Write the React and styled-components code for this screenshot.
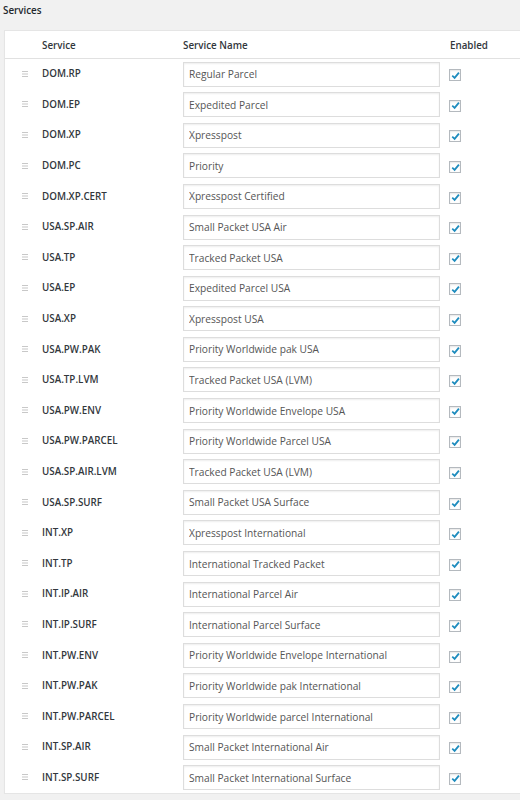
import styled, { createGlobalStyle } from "styled-components";

const GlobalStyle = createGlobalStyle`
  html, body {
    margin: 0;
    padding: 0;
    background: #f1f1f1;
    font-family: "Open Sans", "Liberation Sans", sans-serif;
    color: #23282d;
  }
`;

const services = [
  ["DOM.RP", "Regular Parcel"],
  ["DOM.EP", "Expedited Parcel"],
  ["DOM.XP", "Xpresspost"],
  ["DOM.PC", "Priority"],
  ["DOM.XP.CERT", "Xpresspost Certified"],
  ["USA.SP.AIR", "Small Packet USA Air"],
  ["USA.TP", "Tracked Packet USA"],
  ["USA.EP", "Expedited Parcel USA"],
  ["USA.XP", "Xpresspost USA"],
  ["USA.PW.PAK", "Priority Worldwide pak USA"],
  ["USA.TP.LVM", "Tracked Packet USA (LVM)"],
  ["USA.PW.ENV", "Priority Worldwide Envelope USA"],
  ["USA.PW.PARCEL", "Priority Worldwide Parcel USA"],
  ["USA.SP.AIR.LVM", "Tracked Packet USA (LVM)"],
  ["USA.SP.SURF", "Small Packet USA Surface"],
  ["INT.XP", "Xpresspost International"],
  ["INT.TP", "International Tracked Packet"],
  ["INT.IP.AIR", "International Parcel Air"],
  ["INT.IP.SURF", "International Parcel Surface"],
  ["INT.PW.ENV", "Priority Worldwide Envelope International"],
  ["INT.PW.PAK", "Priority Worldwide pak International"],
  ["INT.PW.PARCEL", "Priority Worldwide parcel International"],
  ["INT.SP.AIR", "Small Packet International Air"],
  ["INT.SP.SURF", "Small Packet International Surface"],
];

const Page = styled.div`
  padding: 2px 0 0 3px;
`;

const Title = styled.h3`
  margin: 0;
  height: 26px;
  padding-top: 2px;
  font-size: 9.8px;
  font-weight: 600;
  line-height: 14px;
`;

const Panel = styled.div`
  margin-left: 1px;
  background: #fff;
  border: 1px solid #e5e5e5;
  border-right: none;
  box-shadow: 0 1px 1px rgba(0, 0, 0, 0.04);
`;

const Row = styled.div`
  display: grid;
  grid-template-columns: 37px 141px 267px 1fr;
  align-items: center;
  height: ${(p) => (p.$head ? "26.5px" : "30.6px")};
  border-bottom: ${(p) => (p.$head ? "1px solid #e1e1e1" : "none")};
`;

const HeadCell = styled.div`
  font-size: 9.8px;
  font-weight: 600;
  color: #32373c;
  padding-top: 2px;
`;

const Handle = styled.div`
  display: flex;
  justify-content: center;
  padding-left: 2px;
`;

const Code = styled.div`
  font-size: 9.8px;
  font-weight: 600;
  color: #32373c;
`;

const NameInput = styled.input`
  box-sizing: border-box;
  width: 257px;
  height: 25px;
  margin: 0;
  padding: 0 5px;
  border: 1px solid #ddd;
  box-shadow: inset 0 1px 2px rgba(0, 0, 0, 0.07);
  background: #fff;
  font-family: "Open Sans", "Liberation Sans", sans-serif;
  font-size: 10.2px;
  color: #555;
  outline: none;
`;

const Check = styled.span`
  box-sizing: border-box;
  display: inline-flex;
  align-items: center;
  justify-content: center;
  width: 12px;
  height: 12px;
  margin: 1px 0 0 -1px;
  border: 1px solid #b4b9be;
  background: #fff;
  box-shadow: inset 0 1px 2px rgba(0, 0, 0, 0.1);
`;

const DragIcon = () => (
  <svg width="6" height="6" viewBox="0 0 6 6">
    <rect x="0" y="0" width="6" height="1" fill="#c8c8c8" />
    <rect x="0" y="2.5" width="6" height="1" fill="#c8c8c8" />
    <rect x="0" y="5" width="6" height="1" fill="#c8c8c8" />
  </svg>
);

const CheckMark = () => (
  <svg width="9" height="9" viewBox="0 0 10 10">
    <path d="M1.4 5.2 L4 7.6 L8.8 1.8" fill="none" stroke="#1e8cbe" strokeWidth="2" />
  </svg>
);

const App = () => {
  return (
    <Page>
      <GlobalStyle />
      <Title>Services</Title>
      <Panel>
        <Row $head>
          <div />
          <HeadCell>Service</HeadCell>
          <HeadCell>Service Name</HeadCell>
          <HeadCell>Enabled</HeadCell>
        </Row>
        {services.map(([code, name]) => (
          <Row key={code + name}>
            <Handle><DragIcon /></Handle>
            <Code>{code}</Code>
            <div><NameInput defaultValue={name} /></div>
            <div><Check><CheckMark /></Check></div>
          </Row>
        ))}
      </Panel>
    </Page>
  );
};

export default App;
